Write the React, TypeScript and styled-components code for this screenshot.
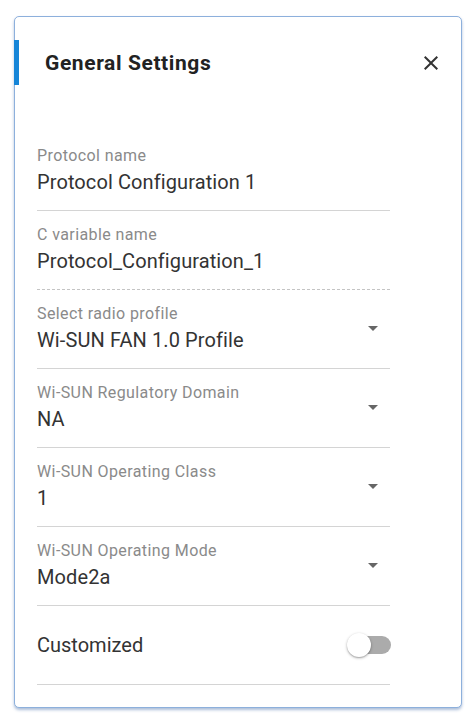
import React from "react";
import styled, { createGlobalStyle } from "styled-components";

const GlobalStyle = createGlobalStyle`
  html, body {
    margin: 0;
    padding: 0;
    background: #ffffff;
  }
  body {
    font-family: Roboto, "Liberation Sans", Arial, sans-serif;
  }
`;

type FieldProps = {
  label: string;
  value: string;
  select?: boolean;
  dotted?: boolean;
};

const fields: FieldProps[] = [
  { label: "Protocol name", value: "Protocol Configuration 1" },
  { label: "C variable name", value: "Protocol_Configuration_1", dotted: true },
  { label: "Select radio profile", value: "Wi-SUN FAN 1.0 Profile", select: true },
  { label: "Wi-SUN Regulatory Domain", value: "NA", select: true },
  { label: "Wi-SUN Operating Class", value: "1", select: true },
  { label: "Wi-SUN Operating Mode", value: "Mode2a", select: true },
];

const CloseIcon = () => (
  <svg viewBox="0 0 24 24" width="24" height="24">
    <path d="M19 6.41L17.59 5 12 10.59 6.41 5 5 6.41 10.59 12 5 17.59 6.41 19 12 13.41 17.59 19 19 17.59 13.41 12z" />
  </svg>
);

const ArrowIcon = () => (
  <svg viewBox="0 0 24 24" width="24" height="24">
    <path d="M7 10l5 5 5-5z" />
  </svg>
);

const Field: React.FC<FieldProps> = ({ label, value, select, dotted }) => (
  <FieldRow $dotted={dotted}>
    <FieldText>
      <Label>{label}</Label>
      <Value>{value}</Value>
    </FieldText>
    {select && (
      <Arrow>
        <ArrowIcon />
      </Arrow>
    )}
  </FieldRow>
);

const App: React.FC = () => {
  return (
    <Page>
      <GlobalStyle />
      <Card>
        <Header>
          <Accent />
          <Title>General Settings</Title>
          <CloseButton aria-label="Close">
            <CloseIcon />
          </CloseButton>
        </Header>
        <Fields>
          {fields.map((f) => (
            <Field key={f.label} {...f} />
          ))}
          <ToggleRow>
            <ToggleLabel>Customized</ToggleLabel>
            <Switch>
              <Track />
              <Thumb />
            </Switch>
          </ToggleRow>
        </Fields>
      </Card>
    </Page>
  );
};

const Page = styled.div`
  padding: 16px 12px 16px 14px;
`;

const Card = styled.div`
  box-sizing: border-box;
  width: 448px;
  background: #fff;
  border: 1px solid #8db0dc;
  border-radius: 5px;
  box-shadow: 0 2px 3px rgba(70, 110, 170, 0.45);
  padding: 23px 0 22px;
`;

const Header = styled.div`
  display: flex;
  align-items: center;
  height: 45px;
`;

const Accent = styled.div`
  width: 5px;
  height: 45px;
  margin-left: -1px;
  background: #1585d8;
`;

const Title = styled.h2`
  flex: 1;
  margin: 0 0 0 26px;
  font-size: 21px;
  font-weight: 700;
  letter-spacing: 0.6px;
  color: #222;
`;

const CloseButton = styled.button`
  display: flex;
  padding: 0;
  margin-right: 18px;
  border: none;
  background: none;
  cursor: pointer;

  svg {
    fill: #333;
  }
`;

const Fields = styled.div`
  width: 353px;
  margin: 47px 0 0 22px;
`;

const FieldRow = styled.div<{ $dotted?: boolean }>`
  display: flex;
  align-items: center;
  padding: 14px 0 16px;
  border-bottom: 1px solid #d4d4d4;

  ${({ $dotted }) =>
    $dotted &&
    `
    border-bottom: none;
    padding-bottom: 17px;
    background-image: linear-gradient(to right, #c4c4c4 60%, transparent 60%);
    background-size: 5px 1px;
    background-repeat: repeat-x;
    background-position: bottom left;
  `}
`;

const FieldText = styled.div`
  flex: 1;
  display: flex;
  flex-direction: column;
  gap: 4px;
`;

const Label = styled.div`
  font-size: 16px;
  line-height: 20px;
  letter-spacing: 0.4px;
  color: #8a8a8a;
`;

const Value = styled.div`
  font-size: 20px;
  line-height: 24px;
  letter-spacing: 0.1px;
  color: #333;
`;

const Arrow = styled.div`
  display: flex;
  margin-right: 5px;

  svg {
    fill: #666;
  }
`;

const ToggleRow = styled.div`
  display: flex;
  align-items: center;
  justify-content: space-between;
  height: 78px;
  border-bottom: 1px solid #d4d4d4;
`;

const ToggleLabel = styled.div`
  font-size: 20px;
  color: #333;
`;

const Switch = styled.div`
  position: relative;
  width: 44px;
  height: 24px;
  margin-right: -1px;
`;

const Track = styled.div`
  position: absolute;
  right: 0;
  top: 3px;
  width: 38px;
  height: 18px;
  border-radius: 9px;
  background: #ababab;
`;

const Thumb = styled.div`
  position: absolute;
  left: 0;
  top: 0;
  width: 24px;
  height: 24px;
  border-radius: 50%;
  background: #fff;
  box-shadow: 0 1px 3px rgba(0, 0, 0, 0.3), 0 1px 1px rgba(0, 0, 0, 0.14);
`;

export default App;
